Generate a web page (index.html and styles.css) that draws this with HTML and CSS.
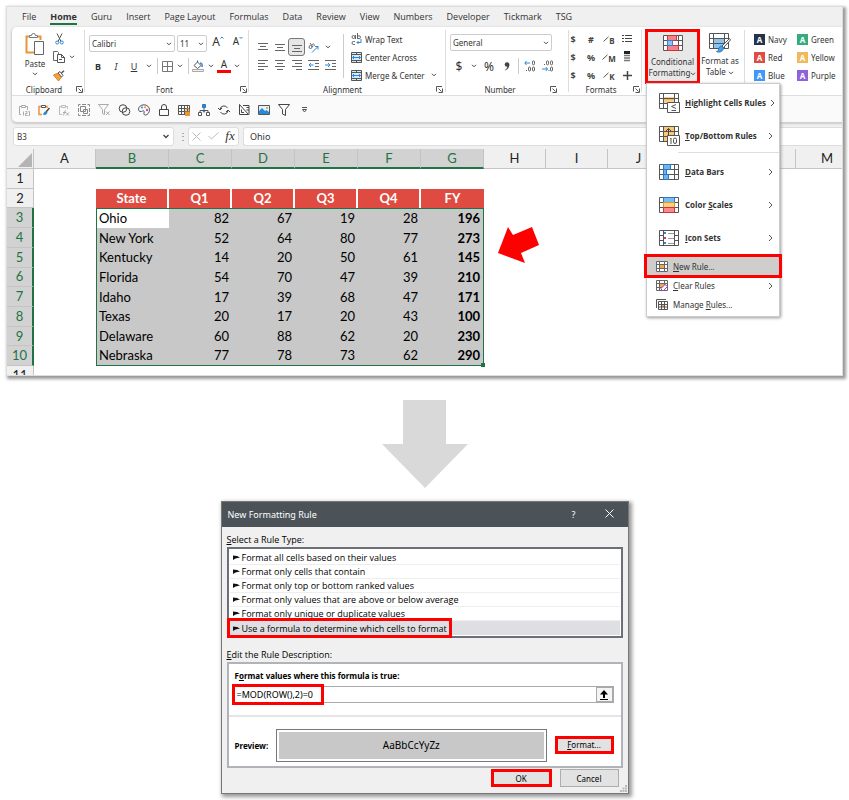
FILE: index.html
```html
<!DOCTYPE html>
<html lang="en">
<head>
    <meta charset="UTF-8">
    <title>New Formatting Rule</title>
    <meta name="viewport" content="width=device-width, initial-scale=1.0">
    <link rel="stylesheet" href="styles.css">
</head>
<body>
    <!-- shared icons -->
    <svg class="sprite" aria-hidden="true">
        <symbol id="chev" viewBox="0 0 6 4"><path d="M1 .8l2 2 2-2" fill="none" stroke="#444" stroke-width="1"/></symbol>
        <symbol id="launch" viewBox="0 0 7 7"><path d="M.5 5.500V.5h5.500M2.500 2.500l3 3M6.500 2.500v4h-4" fill="none" stroke="#555" stroke-width="1"/></symbol>
        <symbol id="right" viewBox="0 0 5 8"><path d="M1 1l3 3-3 3" fill="none" stroke="#555" stroke-width="1"/></symbol>
        <symbol id="grid" viewBox="0 0 20 16"><path d="M.5.5h19v15H.5zM.5 5.500h19M.5 10.500h19M4.500.5v15M15.500.5v15" fill="none" stroke="#555" stroke-width="1"/></symbol>
        <symbol id="smallgrid" viewBox="0 0 12 11"><path d="M.5.5h11v10H.5zM.5 3.500h11M.5 7.500h11M3.500.5v10M8.500.5v10" fill="none" stroke="#666" stroke-width="1"/></symbol>
        <symbol id="pointer" viewBox="0 0 7 5"><path d="M0 .5L4 1l3 1.500L2.500 3.500 0 5z" fill="#111"/></symbol>
        <symbol id="slash" viewBox="0 0 6 6"><path d="M.5 5.500L5.500.8" stroke="#555" stroke-width="1"/></symbol>
    </svg>

    <div class="excel">
        <nav class="tabs">
            <a href="#">File</a>
            <a href="#" class="active">Home</a>
            <a href="#">Guru</a>
            <a href="#">Insert</a>
            <a href="#">Page Layout</a>
            <a href="#">Formulas</a>
            <a href="#">Data</a>
            <a href="#">Review</a>
            <a href="#">View</a>
            <a href="#">Numbers</a>
            <a href="#">Developer</a>
            <a href="#">Tickmark</a>
            <a href="#">TSG</a>
        </nav>

        <div class="ribbon">
            <div class="groups">
                <div class="group clipboard">
                    <div class="group-body">
                        <button class="big paste">
                            <svg width="20" height="22" viewBox="0 0 20 22"><path d="M4 3.500H1.500v16H9M13 3.500h2.500V7" fill="none" stroke="#e8953a" stroke-width="2"/><path d="M4.500 4.500v-2h2a2 2 0 0 1 4 0h2v2z" fill="#fff" stroke="#777"/><path d="M9.500 8.500h9v13h-9z" fill="#fff" stroke="#666"/></svg>
                            <span>Paste</span>
                            <svg width="6" height="4"><use href="#chev"/></svg>
                        </button>
                        <div class="rows">
                            <div class="row"><button class="ib" aria-label="Cut"><svg width="9" height="12" viewBox="0 0 9 12"><path d="M2 .5l4 8M7 .5l-4 8" fill="none" stroke="#555"/><circle cx="2.200" cy="9.500" r="1.500" fill="none" stroke="#2b88d8"/><circle cx="6.800" cy="9.500" r="1.500" fill="none" stroke="#2b88d8"/></svg></button></div>
                            <div class="row"><button class="ib" aria-label="Copy"><svg width="12" height="12" viewBox="0 0 12 12"><path d="M4 9.500H.5v-9h4l1 1V3" fill="none" stroke="#666"/><path d="M4.500 3.500h4l3 3v5h-7zM8.500 3.500v3h3M6 8.500h3" fill="#fff" stroke="#555"/></svg></button><button class="ib chev" aria-label="Copy options"><svg width="6" height="4"><use href="#chev"/></svg></button></div>
                            <div class="row"><button class="ib" aria-label="Format painter"><svg width="12" height="11" viewBox="0 0 12 11"><path d="M.5 5l5-2 3 4-3 4z" fill="#f3a33c" stroke="#d98324"/><path d="M5 3l2-1.500 3 4-1.500 1.500z" fill="#fff" stroke="#555"/><path d="M8.500 3L11 .8" stroke="#555" stroke-width="1.500"/></svg></button></div>
                        </div>
                    </div>
                    <div class="group-foot"><span>Clipboard</span><svg width="7" height="7"><use href="#launch"/></svg></div>
                </div>

                <div class="group font">
                    <div class="group-body stack">
                        <div class="row combos">
                            <label class="combo face"><select aria-label="Font"><option>Calibri</option></select><svg width="6" height="4"><use href="#chev"/></svg></label>
                            <label class="combo size"><select aria-label="Font size"><option>11</option></select><svg width="6" height="4"><use href="#chev"/></svg></label>
                            <button class="ib grow" aria-label="Increase font size">A<svg width="4" height="4" viewBox="0 0 4 4"><path d="M.5 2.500L2 1l1.500 1.500" fill="none" stroke="#2b88d8"/></svg></button>
                            <button class="ib grow small" aria-label="Decrease font size">A<svg width="4" height="4" viewBox="0 0 4 4"><path d="M.5 1L2 2.500 3.500 1" fill="none" stroke="#2b88d8"/></svg></button>
                        </div>
                        <div class="row">
                            <button class="ib"><b>B</b></button>
                            <button class="ib"><i>I</i></button>
                            <button class="ib"><u>U</u></button>
                            <button class="ib chev" aria-label="Underline options"><svg width="6" height="4"><use href="#chev"/></svg></button>
                            <span class="vr"></span>
                            <button class="ib mid" aria-label="Borders"><svg width="11" height="11" viewBox="0 0 11 11"><path d="M.5.5h10v10H.5zM5.500.5v10M.5 5.500h10" fill="none" stroke="#777"/></svg></button>
                            <button class="ib chev" aria-label="Border options"><svg width="6" height="4"><use href="#chev"/></svg></button>
                            <span class="vr"></span>
                            <button class="ib mid" aria-label="Fill colour"><svg width="12" height="12" viewBox="0 0 12 12"><path d="M2 5.500L5.500 2 9 5.500 5.500 8.500zM5.500 2V.5" fill="none" stroke="#555"/><path d="M8 3c2 0 2.500 1.500 2 4" fill="none" stroke="#2b88d8" stroke-width="1.500"/><path d="M.5 9.500h11v2H.5z" fill="#eee" stroke="#aaa"/></svg></button>
                            <button class="ib chev" aria-label="Fill options"><svg width="6" height="4"><use href="#chev"/></svg></button>
                            <button class="ib mid colour">A</button>
                            <button class="ib chev" aria-label="Font colour options"><svg width="6" height="4"><use href="#chev"/></svg></button>
                        </div>
                    </div>
                    <div class="group-foot"><span>Font</span><svg width="7" height="7"><use href="#launch"/></svg></div>
                </div>

                <div class="group align">
                    <div class="group-body">
                        <div class="align-grid">
                            <button class="ib" aria-label="Top align"><svg width="10" height="8" viewBox="0 0 10 8"><path d="M0 .5h10M2 3.500h6M0 6.500h10" stroke="#666"/></svg></button>
                            <button class="ib" aria-label="Middle align"><svg width="10" height="8" viewBox="0 0 10 8"><path d="M0 1.500h10M2 4.500h6M0 7.500h10" stroke="#666"/></svg></button>
                            <button class="ib pressed" aria-label="Bottom align"><svg width="10" height="10" viewBox="0 0 10 10"><path d="M0 3.500h10M2 6.500h6M0 9.500h10" stroke="#666"/></svg></button>
                            <button class="ib" aria-label="Orientation"><svg width="12" height="11" viewBox="0 0 12 11"><circle cx="2.500" cy="5" r="1.500" fill="none" stroke="#666"/><path d="M2 1l3 4M4 3c1-2 3-1 2 1" fill="none" stroke="#666"/><path d="M4 10.500l6-6M7 4.500h3v3" fill="none" stroke="#2b88d8"/></svg></button>
                            <button class="ib chev" aria-label="Orientation options"><svg width="6" height="4"><use href="#chev"/></svg></button>
                            <button class="ib" aria-label="Align left"><svg width="10" height="11" viewBox="0 0 10 11"><path d="M0 .5h10M0 3.500h7M0 6.500h10M0 9.500h6" stroke="#666"/></svg></button>
                            <button class="ib" aria-label="Center"><svg width="10" height="11" viewBox="0 0 10 11"><path d="M0 .5h10M2 3.500h6M0 6.500h10M2 9.500h6" stroke="#666"/></svg></button>
                            <button class="ib" aria-label="Align right"><svg width="10" height="11" viewBox="0 0 10 11"><path d="M0 .5h10M3 3.500h7M0 6.500h10M4 9.500h6" stroke="#666"/></svg></button>
                            <button class="ib" aria-label="Decrease indent"><svg width="11" height="11" viewBox="0 0 11 11"><path d="M0 .5h11M7 3.500h4M7 6.500h4M0 9.500h11" stroke="#666"/><path d="M5.500 5H1M3 3L1 5l2 2" fill="none" stroke="#2b88d8"/></svg></button>
                            <button class="ib" aria-label="Increase indent"><svg width="11" height="11" viewBox="0 0 11 11"><path d="M0 .5h11M7 3.500h4M7 6.500h4M0 9.500h11" stroke="#666"/><path d="M0 5h4.500M3 3l2 2-2 2" fill="none" stroke="#2b88d8"/></svg></button>
                        </div>
                        <span class="vr tall"></span>
                        <div class="rows wrap-rows">
                            <button class="line"><svg width="11" height="12" viewBox="0 0 11 12"><circle cx="2.500" cy="4" r="1.500" fill="none" stroke="#666"/><path d="M4.500 2v4M6.500 0v6M4 8.500H2.500a1 1 0 0 0 0 3H4" fill="none" stroke="#666"/><circle cx="8" cy="4.300" r="1.500" fill="none" stroke="#666"/><path d="M10 6v3.500H6M7.500 8L6 9.500 7.500 11" fill="none" stroke="#2b88d8"/></svg>Wrap Text</button>
                            <button class="line"><svg width="11" height="11" viewBox="0 0 11 11"><path d="M.5.5h10v10H.5z" fill="#d5e9f8" stroke="#555"/><path d="M5.500.5v2M5.500 8.500v2M.5 2.500h10M.5 8.500h10" stroke="#555"/><path d="M1.500 5.500h8M3 4L1.500 5.500 3 7M8 4l1.500 1.500L8 7" fill="none" stroke="#2b88d8"/></svg>Center Across</button>
                            <button class="line"><svg width="11" height="11" viewBox="0 0 11 11"><path d="M.5.5h10v10H.5z" fill="#d5e9f8" stroke="#555"/><path d="M5.500.5v2M5.500 8.500v2M.5 2.500h10M.5 8.500h10" stroke="#555"/><path d="M1.500 5.500h8M3 4L1.500 5.500 3 7M8 4l1.500 1.500L8 7" fill="none" stroke="#2b88d8"/></svg>Merge &amp; Center<svg class="end" width="6" height="4"><use href="#chev"/></svg></button>
                        </div>
                    </div>
                    <div class="group-foot"><span>Alignment</span><svg width="7" height="7"><use href="#launch"/></svg></div>
                </div>

                <div class="group number">
                    <div class="group-body stack">
                        <div class="row combos">
                            <label class="combo format"><select aria-label="Number format"><option>General</option></select><svg width="6" height="4"><use href="#chev"/></svg></label>
                        </div>
                        <div class="row">
                            <button class="ib sign">$</button>
                            <button class="ib chev" aria-label="Currency options"><svg width="6" height="4"><use href="#chev"/></svg></button>
                            <button class="ib sign">%</button>
                            <button class="ib" aria-label="Comma style"><svg width="6" height="9" viewBox="0 0 6 9"><circle cx="3" cy="2.500" r="2.300" fill="#444"/><path d="M5.300 2.500C5.300 5.500 4 7.500 1 8.500L.8 8C2.500 7 3.500 5.500 3.400 3.500z" fill="#444"/></svg></button>
                            <span class="vr"></span>
                            <button class="ib" aria-label="Increase decimal"><svg width="12" height="12" viewBox="0 0 12 12"><path d="M6 3H1M2.500 1L.8 3l1.700 2" fill="none" stroke="#2b88d8"/><rect x="8.500" y=".8" width="2" height="4" rx="1" fill="none" stroke="#666"/><rect x="4.500" y="7" width="2" height="4" rx="1" fill="none" stroke="#666"/><rect x="8.500" y="7" width="2" height="4" rx="1" fill="none" stroke="#666"/><path d="M2 10.500h1" stroke="#666"/></svg></button>
                            <button class="ib" aria-label="Decrease decimal"><svg width="12" height="12" viewBox="0 0 12 12"><path d="M0 9h5.500M3.800 7l1.700 2-1.700 2" fill="none" stroke="#2b88d8"/><rect x="4.500" y=".8" width="2" height="4" rx="1" fill="none" stroke="#666"/><rect x="8.500" y=".8" width="2" height="4" rx="1" fill="none" stroke="#666"/><rect x="8.500" y="7" width="2" height="4" rx="1" fill="none" stroke="#666"/><path d="M2 4.500h1M6.500 10.500h1" stroke="#666"/></svg></button>
                        </div>
                    </div>
                    <div class="group-foot"><span>Number</span><svg width="7" height="7"><use href="#launch"/></svg></div>
                </div>

                <div class="group formats">
                    <div class="group-body">
                        <div class="format-grid">
                            <button class="ib">$</button>
                            <button class="ib">#</button>
                            <button class="ib unit"><svg width="6" height="6"><use href="#slash"/></svg>B</button>
                            <button class="ib" aria-label="List"><svg width="10" height="10" viewBox="0 0 10 10"><path d="M0 1.500h2M3 1.500h7M0 4.500h2M3 4.500h7M0 7.500h2M3 7.500h7" stroke="#444"/></svg></button>
                            <button class="ib">$</button>
                            <button class="ib">%</button>
                            <button class="ib unit"><svg width="6" height="6"><use href="#slash"/></svg>M</button>
                            <button class="ib" aria-label="Bands"><svg width="6" height="12" viewBox="0 0 6 12"><path d="M0 1.500h6" stroke="#222" stroke-width="3"/><path d="M0 4.500h6M0 7h6M0 9.500h6" stroke="#777" stroke-width="1.500"/></svg></button>
                            <button class="ib">$</button>
                            <button class="ib">%</button>
                            <button class="ib unit"><svg width="6" height="6"><use href="#slash"/></svg>K</button>
                            <button class="ib" aria-label="Add"><svg width="9" height="9" viewBox="0 0 9 9"><path d="M4.500 0v9M0 4.500h9" stroke="#444" stroke-width="1.500"/></svg></button>
                        </div>
                    </div>
                    <div class="group-foot"><span>Formats</span><svg width="7" height="7"><use href="#launch"/></svg></div>
                </div>

                <div class="group styles">
                    <div class="cond">
                        <button class="big marked">
                            <svg width="20" height="16" viewBox="0 0 20 16"><path fill="#fff" d="M0 0h20v16H0z"/><use href="#grid"/><path d="M4.500.5h9v5h-9zM4.500 10.500h11v5h-11z" fill="#f5828a" stroke="#d13438"/><path d="M4.500 5.500h5v5h-5z" fill="#8cc4f0" stroke="#2b88d8"/></svg>
                            <span>Conditional<br>Formatting<svg width="6" height="4"><use href="#chev"/></svg></span>
                        </button>

                        <div class="menu">
                            <button class="item large"><svg width="22" height="20" viewBox="0 0 22 20"><path d="M4.500 5h11v6h-11z" fill="#fbd08a"/><path d="M5 5.500h10" stroke="#e8953a" stroke-width="2"/><use href="#grid" width="20" height="16"/><path d="M8.500 9.500h12v10h-12z" fill="#fff" stroke="#555"/><path d="M17 11.500l-4.500 2L17 15.500M12.500 17.500H17" fill="none" stroke="#555"/></svg><span><u>H</u>ighlight Cells Rules</span><svg class="end" width="5" height="8"><use href="#right"/></svg></button>
                            <button class="item large"><svg width="22" height="20" viewBox="0 0 22 20"><path d="M5 1h10v14H5z" fill="#fbc675"/><use href="#grid" width="20" height="16"/><path d="M9.500 9V2.500M7 5l2.500-2.500L12 5" fill="none" stroke="#444"/><path d="M8.500 9.500h12v10h-12z" fill="#fff" stroke="#555"/><path d="M11 13l1-1v6" fill="none" stroke="#555"/><rect x="14.500" y="12" width="3" height="5.500" rx="1.500" fill="none" stroke="#555"/></svg><span><u>T</u>op/Bottom Rules</span><svg class="end" width="5" height="8"><use href="#right"/></svg></button>
                            <hr>
                            <button class="item large"><svg width="22" height="16" viewBox="0 0 22 16"><use href="#grid" width="20" height="16"/><path d="M4.500.5h7v5h-7zM4.500 5.500h3v5h-3zM4.500 10.500h5v5h-5z" fill="#6db5ee" stroke="#2b78c0"/></svg><span><u>D</u>ata Bars</span><svg class="end" width="5" height="8"><use href="#right"/></svg></button>
                            <button class="item large"><svg width="22" height="16" viewBox="0 0 22 16"><use href="#grid" width="20" height="16"/><path d="M4.500.5h11v5h-11z" fill="#79bdf2" stroke="#2b78c0"/><path d="M4.500 5.500h11v5h-11z" fill="#fdd27c" stroke="#d99a2b"/><path d="M4.500 10.500h11v5h-11z" fill="#f98a90" stroke="#d13438"/></svg><span>Color <u>S</u>cales</span><svg class="end" width="5" height="8"><use href="#right"/></svg></button>
                            <button class="item large"><svg width="22" height="16" viewBox="0 0 22 16"><use href="#grid" width="20" height="16"/><path d="M5 1h10v14H5z" fill="#fff"/><path d="M5 2h2v2H5zM5 12h2v2H5z" fill="#2b88d8"/><path d="M5 7h2v2H5z" fill="#e03a3a"/><path d="M9 3.500h6M9 8.500h6M9 13.500h6" stroke="#999"/></svg><span><u>I</u>con Sets</span><svg class="end" width="5" height="8"><use href="#right"/></svg></button>
                            <button class="item picked"><svg width="12" height="11" viewBox="0 0 12 11"><path d="M0 0h12v11H0z" fill="#fff"/><path d="M3 3h6v5H3z" fill="#f5a64b"/><use href="#smallgrid" width="12" height="11"/></svg><span><u>N</u>ew Rule...</span></button>
                            <button class="item"><svg width="12" height="11" viewBox="0 0 12 11"><path d="M3 3h6v4H3z" fill="#f5a64b"/><use href="#smallgrid" width="12" height="11"/><path d="M5 8.500l4-4 2.500 2-4 4H6z" fill="#fff" stroke="#a33ab8"/></svg><span><u>C</u>lear Rules</span><svg class="end" width="5" height="8"><use href="#right"/></svg></button>
                            <button class="item"><svg width="12" height="11" viewBox="0 0 12 11"><path d="M.5 9V.5H10" fill="none" stroke="#555"/><path d="M5 5h4v3H5z" fill="#f5a64b"/><path d="M2.500 2.500h9v8h-9zM2.500 5.500h9M2.500 8h9M5.500 2.500v8M8.500 2.500v8" fill="none" stroke="#555"/></svg><span>Manage <u>R</u>ules...</span></button>
                        </div>
                    </div>
                    <button class="big table-style">
                        <svg width="22" height="20" viewBox="0 0 22 20"><path d="M5 5h10v10H5z" fill="#8cc4f0"/><use href="#grid" width="20" height="16"/><path d="M20.500 5.500L13 13l1.500 1.500L21.500 7z" fill="#fff" stroke="#555"/><path d="M12.500 13c-2 0-2.500 1.500-3 4-.5 1.500-2 1.500-2 1.500 3 1.500 6.500 0 7-3.500z" fill="#4aa0e6" stroke="#2b78c0"/></svg>
                        <span>Format as<br>Table <svg width="6" height="4"><use href="#chev"/></svg></span>
                    </button>
                </div>

                <div class="group swatches">
                    <div class="swatch-grid">
                        <button class="swatch"><span class="chip navy">A</span>Navy</button>
                        <button class="swatch"><span class="chip green">A</span>Green</button>
                        <button class="swatch"><span class="chip red">A</span>Red</button>
                        <button class="swatch"><span class="chip yellow">A</span>Yellow</button>
                        <button class="swatch"><span class="chip blue">A</span>Blue</button>
                        <button class="swatch"><span class="chip purple">A</span>Purple</button>
                    </div>
                </div>
            </div>

            <div class="quick">
                <button class="ib" aria-label="Paste values"><svg width="12" height="12" viewBox="0 0 12 12"><path d="M3 2.500H1.500v8H3M8 2.500h1.500V6M3.500 3.500v-2h4v2zM5.500 7.500v4M7.500 7.500h1.500v2H7.500v2H9.500M10.500 7.500h1v4h-1" fill="none" stroke="#aaa"/></svg></button>
                <button class="ib" aria-label="Paste formats"><svg width="12" height="12" viewBox="0 0 12 12"><path d="M3 2.500H1v8h3M7 2.500h2V4" fill="none" stroke="#e8953a" stroke-width="1.500"/><path d="M3.500 3.500v-2h4v2z" fill="#fff" stroke="#555"/><path d="M11.500 4L8 8" stroke="#444" stroke-width="1.500"/><path d="M8.500 7.500c-2-.5-3 1-3.500 3 2 1 4 0 4.500-2z" fill="#2b88d8"/></svg></button>
                <button class="ib" aria-label="Paste formulas"><svg width="12" height="12" viewBox="0 0 12 12"><path d="M3 2.500H1.500v8H4M8 2.500h1.500V5M3.500 3.500v-2h4v2z" fill="none" stroke="#bbb"/><path d="M5 11.500c1.500 0 1-5 3-5M5 8.500h3M8 8.500l3 3M11 8.500l-3 3" fill="none" stroke="#aaa"/></svg></button>
                <button class="ib" aria-label="Group objects"><svg width="12" height="12" viewBox="0 0 12 12"><path d="M.5 2.500v-2h2M9.500.5h2v2M11.500 9.500v2h-2M2.500 11.500h-2v-2M4 .5h4M4 11.500h4M.5 4v4M11.500 4v4M2.500 2.500h5v5h-5zM5.500 5.500h4v4h-4z" fill="none" stroke="#888"/></svg></button>
                <button class="ib" aria-label="Clear filter"><svg width="12" height="12" viewBox="0 0 12 12"><path d="M.5.5h10L6.500 5.500v5l-2-1v-4zM8 7.500l3.500 3.500M11.500 7.500L8 11" fill="none" stroke="#aaa"/></svg></button>
                <button class="ib" aria-label="Merge shapes"><svg width="13" height="12" viewBox="0 0 13 12"><circle cx="5" cy="4.500" r="3.800" fill="none" stroke="#444"/><circle cx="8" cy="7.500" r="3.800" fill="none" stroke="#444"/></svg></button>
                <button class="ib" aria-label="Theme colours"><svg width="12" height="12" viewBox="0 0 12 12"><path d="M6 .8c-3 0-5.500 2-5.500 4.500S3 8 4.500 7s2 .5 1.500 2 .5 2 1.500 2c2 0 4-2.500 4-5.200S9 .8 6 .8z" fill="none" stroke="#555"/><circle cx="4" cy="3.500" r="1" fill="#2b88d8"/><circle cx="7" cy="3.200" r="1" fill="#e8953a"/><circle cx="9" cy="6" r="1.200" fill="#c050c8"/></svg></button>
                <button class="ib" aria-label="Protect"><svg width="10" height="12" viewBox="0 0 10 12"><path d="M.5 5.500h9v6h-9zM2.500 5.500V3a2.500 2.500 0 0 1 5 0v2.500" fill="none" stroke="#444"/></svg></button>
                <button class="ib" aria-label="Lock cells"><svg width="12" height="12" viewBox="0 0 12 12"><path d="M.5 1.500h11v9H.5zM.5 4.500h11M.5 7.500h11M3.500 1.500v9M6.500 1.500v9M9.500 1.500v9" fill="none" stroke="#555"/><path d="M7 7.500h5V12H7z" fill="#e8953a"/><path d="M8 7V6a1.500 1.500 0 0 1 3 0v1" fill="none" stroke="#e8953a"/></svg></button>
                <button class="ib" aria-label="Trace"><svg width="12" height="12" viewBox="0 0 12 12"><path d="M4.500.5h3v3h-3z" fill="#2b88d8" stroke="#2b78c0"/><path d="M6 4v3M2 8.500V6.500h8v2" fill="none" stroke="#555"/><path d="M.5 8.500h3v3h-3zM8.500 8.500h3v3h-3z" fill="#fff" stroke="#555"/><path d="M4.500 7L6 9l1.500-2z" fill="#2b88d8"/></svg></button>
                <button class="ib" aria-label="Refresh"><svg width="12" height="10" viewBox="0 0 12 10"><path d="M2 4.500a4 4 0 0 1 7.500-1.500M10 5.500A4 4 0 0 1 2.500 7M0 3l2 2 2-2M8 7l2-2 2 2" fill="none" stroke="#444"/></svg></button>
                <button class="ib" aria-label="Edit shape"><svg width="12" height="12" viewBox="0 0 12 12"><path d="M1.500.5v10h9zM3.500 5.500v3H6M5 1.500h6v9M8.500 3.500H11M8.500 6H11" fill="none" stroke="#444"/></svg></button>
                <button class="ib" aria-label="Picture"><svg width="12" height="10" viewBox="0 0 12 10"><path d="M.5.5h11v9H.5z" fill="#e5f2fb" stroke="#555"/><path d="M1 9V6l3-3 3 3 1.500-1L11 7v2z" fill="#2b88d8"/><circle cx="9" cy="3" r="1" fill="#e8953a"/></svg></button>
                <button class="ib" aria-label="Filter"><svg width="12" height="12" viewBox="0 0 12 12"><path d="M.5.5h11L7.500 5.500v6l-3-1.500V5.500z" fill="none" stroke="#444"/></svg></button>
                <button class="ib" aria-label="More commands"><svg width="5" height="6" viewBox="0 0 5 6"><path d="M0 .5h5M.5 2.500L2.500 5l2-2.500z" fill="none" stroke="#555"/></svg></button>
            </div>
        </div>

        <div class="formula-bar">
            <label class="name-box"><input type="text" value="B3" aria-label="Name box"><svg width="8" height="5" viewBox="0 0 6 4"><use href="#chev"/></svg></label>
            <span class="dots">⋮</span>
            <div class="fx">
                <svg width="9" height="9" viewBox="0 0 9 9"><path d="M.5.5l8 8M8.500.5l-8 8" stroke="#bbb"/></svg>
                <svg width="11" height="8" viewBox="0 0 11 8"><path d="M.5 4l3 3 7-6.500" fill="none" stroke="#bbb"/></svg>
                <i>fx</i>
            </div>
            <input class="formula" type="text" value="Ohio" aria-label="Formula">
        </div>

        <div class="sheet">
            <table>
                <colgroup>
                    <col class="col-row"><col class="col-a"><col class="col-b">
                    <col class="col-q" span="5">
                    <col class="col-a" span="3">
                    <col class="col-q" span="3">
                </colgroup>
                <thead>
                    <tr>
                        <th class="corner"><svg width="14" height="14" viewBox="0 0 14 14"><path d="M14 0v14H0z" fill="#b4b4b4"/></svg></th>
                        <th>A</th><th class="on">B</th><th class="on">C</th><th class="on">D</th><th class="on">E</th><th class="on">F</th><th class="on">G</th>
                        <th>H</th><th>I</th><th>J</th><th>K</th><th>L</th><th>M</th>
                    </tr>
                </thead>
                <tbody>
                    <tr><th>1</th></tr>
                    <tr class="titles"><th>2</th><td></td><td>State</td><td>Q1</td><td>Q2</td><td>Q3</td><td>Q4</td><td>FY</td></tr>
                </tbody>
                <tbody class="selection">
                    <tr><th>3</th><td></td><td class="current">Ohio</td><td>82</td><td>67</td><td>19</td><td>28</td><td>196</td></tr>
                    <tr><th>4</th><td></td><td>New York</td><td>52</td><td>64</td><td>80</td><td>77</td><td>273</td></tr>
                    <tr><th>5</th><td></td><td>Kentucky</td><td>14</td><td>20</td><td>50</td><td>61</td><td>145</td></tr>
                    <tr><th>6</th><td></td><td>Florida</td><td>54</td><td>70</td><td>47</td><td>39</td><td>210</td></tr>
                    <tr><th>7</th><td></td><td>Idaho</td><td>17</td><td>39</td><td>68</td><td>47</td><td>171</td></tr>
                    <tr><th>8</th><td></td><td>Texas</td><td>20</td><td>17</td><td>20</td><td>43</td><td>100</td></tr>
                    <tr><th>9</th><td></td><td>Delaware</td><td>60</td><td>88</td><td>62</td><td>20</td><td>230</td></tr>
                    <tr><th>10</th><td></td><td>Nebraska</td><td>77</td><td>78</td><td>73</td><td>62</td><td class="handle">290</td></tr>
                </tbody>
                <tbody>
                    <tr><th>11</th></tr>
                </tbody>
            </table>
            <svg class="callout" width="41" height="36" viewBox="0 0 41 36"><path d="M0 26L10 0l5 8 19-8 7 18-18 8 4 10z" fill="#f00"/></svg>
        </div>
    </div>

    <svg class="down" width="86" height="88" viewBox="0 0 86 88"><path d="M21 0h43v44h22L43 88 0 44h21z" fill="#d9d9d9"/></svg>

    <div class="dialog">
        <div class="dialog-title">
            <span>New Formatting Rule</span>
            <button aria-label="Help">?</button>
            <button aria-label="Close"><svg width="9" height="9" viewBox="0 0 9 9"><path d="M.5.5l8 8M8.500.5l-8 8" stroke="#fff"/></svg></button>
        </div>
        <div class="dialog-body">
            <div class="caption" id="typeLabel"><u>S</u>elect a Rule Type:</div>
            <ul class="types" role="listbox" aria-labelledby="typeLabel">
                <li role="option"><svg width="7" height="5"><use href="#pointer"/></svg>Format all cells based on their values</li>
                <li role="option"><svg width="7" height="5"><use href="#pointer"/></svg>Format only cells that contain</li>
                <li role="option"><svg width="7" height="5"><use href="#pointer"/></svg>Format only top or bottom ranked values</li>
                <li role="option"><svg width="7" height="5"><use href="#pointer"/></svg>Format only values that are above or below average</li>
                <li role="option"><svg width="7" height="5"><use href="#pointer"/></svg>Format only unique or duplicate values</li>
                <li role="option" class="chosen" aria-selected="true"><svg width="7" height="5"><use href="#pointer"/></svg>Use a formula to determine which cells to format</li>
            </ul>
            <div class="caption"><u>E</u>dit the Rule Description:</div>
            <div class="rule">
                <div class="rule-formula">
                    <label for="formula">F<u>o</u>rmat values where this formula is true:</label>
                    <div class="field">
                        <input type="text" id="formula" value="=MOD(ROW(),2)=0">
                        <button aria-label="Collapse dialog"><svg width="8" height="10" viewBox="0 0 8 10"><path d="M4 8V2" stroke="#000" stroke-width="2"/><path d="M0 4.500L4 0l4 4.500z"/><path d="M0 9.500h8" stroke="#000"/></svg></button>
                    </div>
                </div>
                <div class="rule-preview">
                    <b>Preview:</b>
                    <div class="sample">AaBbCcYyZz</div>
                    <button class="btn format-btn"><span><u>F</u>ormat...</span></button>
                </div>
            </div>
            <div class="actions">
                <button class="btn ok">OK</button>
                <button class="btn">Cancel</button>
            </div>
        </div>
        <svg class="grip" width="7" height="7" viewBox="0 0 7 7"><path d="M5 0h2v2H5zM5 2.500h2v2H5zM5 5h2v2H5zM2.500 2.500h2v2h-2zM2.500 5h2v2h-2zM0 5h2v2H0z" fill="#bbb"/></svg>
    </div>
</body>
</html>
```

FILE: styles.css
```css
*, *::after { box-sizing: border-box; }
body {
    margin: 0; padding: 6px; background: #fff; color: #333;
    font-family: "Noto Sans", "Open Sans", sans-serif; font-size: 8px; line-height: 11px;
}
button, input, select { font: inherit; color: inherit; }
button { padding: 0; border: none; background: none; cursor: pointer; }
a { color: inherit; text-decoration: none; }
svg { flex: none; }
.sprite { position: absolute; width: 0; height: 0; }

/* spreadsheet window */
.excel {
    background: #f0f0f0; border: 1px solid #ddd; overflow: hidden;
    box-shadow: 2px 2px 3px 1px #999;
}
.tabs {
    display: flex; gap: 14px; padding: 3px 15px 0; height: 20px;
    font-family: "Open Sans", sans-serif; font-size: 9px; line-height: 14px;
}
.tabs .active { font-weight: bold; border-bottom: 2px solid #217346; height: 15px; }

.ribbon {
    margin-left: 5px; background: #fff; border-radius: 5px 0 0 5px;
    box-shadow: 0 1px 2px 1px #ccc;
}
.groups { display: flex; height: 69px; padding-top: 3px; border-bottom: 1px solid #ddd; }
.group { position: relative; display: flex; flex-direction: column; flex: none; }
.group::after { content: ""; position: absolute; right: 0; top: 0; bottom: 3px; width: 1px; background: #ddd; }
.group-body { display: flex; height: 54px; }
.group-foot { display: flex; align-items: center; padding-right: 2px; }
.group-foot span { flex: 1; text-align: center; }
.clipboard { width: 73px; }
.font { width: 164px; padding-left: 4px; }
.align { width: 197px; }
.number { width: 123px; padding-left: 4px; }
.number .group-foot { padding-right: 12px; }
.formats { width: 73px; }
.align .group-foot { padding-right: 3px; }

.ib { display: flex; align-items: center; justify-content: center; width: 18px; height: 18px; font-size: 9px; }
.ib.mid { width: 14px; }
.ib.chev { width: 12px; }
.row { display: flex; align-items: center; }
.rows { display: flex; flex-direction: column; }
.stack { flex-direction: column; justify-content: space-between; padding: 4px 0 9px; }
.vr { width: 1px; height: 16px; margin: 0 2px; background: #ccc; }
.vr.tall { height: 44px; margin: 4px 7px 0 4px; }
.big {
    display: flex; flex-direction: column; align-items: center; text-align: center;
    width: 44px; padding-top: 3px; gap: 2px;
}
.paste { gap: 3px; width: 46px; }
.clipboard .rows { width: 27px; margin-left: -8px; }
.clipboard .chev { width: 8px; }
.combos { gap: 2px; }
.combo { position: relative; display: flex; }
.combo select {
    appearance: none; width: 100%; height: 17px; padding: 0 2px; background: #fff;
    border: 1px solid #ccc; border-radius: 2px;
}
.combo svg { position: absolute; right: 3px; top: 7px; pointer-events: none; }
.face { width: 86px; }
.size { width: 30px; }
.format { width: 102px; }
.grow { font-size: 12px; align-items: flex-start; padding-top: 2px; }
.grow.small { font-size: 10px; }
.colour { border-bottom: 3px solid #f00; height: 14px; font-size: 10px; }
.align-grid { display: grid; grid-template-columns: repeat(5, 17px); align-content: start; width: 90px; padding: 8px 0 0 5px; }
.pressed { width: 17px; background: #e6e6e6; border: 1px solid #777; border-radius: 3px; }
.align-grid .ib { width: 17px; }
.align-grid .chev { width: 12px; }
.wrap-rows { flex: 1; }
.line { display: flex; align-items: center; gap: 3px; height: 18px; padding-right: 9px; }
.end { margin-left: auto; }
.sign { font-size: 12px; }
.format-grid { display: grid; grid-template-columns: repeat(4, 18px); width: 72px; margin-left: -5px; color: #444; }
.format-grid .ib { font-weight: bold; }
.format-grid .unit { font-size: 8px; padding-top: 3px; }
.unit svg { margin-bottom: 4px; }

.styles { flex-direction: row; width: 103px; padding-left: 4px; }
.styles .big { height: 54px; white-space: nowrap; }
.styles .big span svg { display: inline-block; vertical-align: middle; }
.cond { position: relative; margin: -1px 0 0 -1px; }
.cond .marked { width: 55px; height: 55px; background: #e8e8e8; border: 3px solid #f00; gap: 5px; }
.styles .table-style { width: 40px; }
.swatch-grid { display: grid; grid-template-columns: 43px 43px; padding-left: 9px; }
.swatches::after { display: none; }
.swatch { display: flex; align-items: center; gap: 3px; height: 18px; }
.chip { width: 11px; height: 11px; color: #fff; font-weight: bold; text-align: center; }
.navy { background: #24344c; }
.green { background: #35ac7d; }
.red { background: #e04b43; }
.yellow { background: #f0b95c; }
.blue { background: #4198f7; }
.purple { background: #8f62dc; }

.menu {
    position: absolute; z-index: 2; left: 1px; top: 54px; width: 134px; padding: 2px 0;
    display: flex; flex-direction: column;
    background: #fff; border: 1px solid #ccc; box-shadow: 1px 1px 3px #999;
}
.item { display: flex; align-items: center; gap: 5px; height: 19px; padding: 0 6px 0 9px; text-align: left; white-space: nowrap; }
.item.large { height: 33px; gap: 4px; padding-left: 12px; font-family: "Open Sans", sans-serif; font-weight: bold; }
.menu hr { width: 101px; margin: 0 0 2px auto; border: none; border-top: 1px solid #ddd; }
.item.picked { height: 24px; margin: 0 -3px -2px; padding-left: 9px; background: #d0cecd; border: 3px solid #f00; }

.quick { display: flex; gap: 2px; padding: 5px 3px 3px; background: #fafafa; border-radius: 0 0 0 5px; }

.formula-bar { display: flex; align-items: center; gap: 4px; padding: 5px 0 4px 6px; height: 27px; }
.name-box, .fx, .formula { height: 19px; background: #fff; border: 1px solid #ddd; border-radius: 3px; }
.name-box { display: flex; align-items: center; width: 161px; padding: 0 3px; }
.name-box input { flex: 1; min-width: 0; padding: 0; border: none; }
.dots { width: 6px; font-size: 10px; color: #777; text-align: center; }
.fx { display: flex; align-items: center; justify-content: space-around; width: 51px; font: 13px "Liberation Serif", serif; }
.formula { flex: 1; min-width: 0; padding: 0 6px; border-right: none; border-radius: 3px 0 0 3px; font-size: 9px; }

/* grid */
.sheet { position: relative; height: 226px; overflow: hidden; background: #fff; }
.sheet table {
    table-layout: fixed; width: 852px; height: 237px; border-spacing: 0;
    font: 13px/15px Lato, sans-serif; color: #000;
}
.col-row { width: 27px; }
.col-a { width: 62px; }
.col-b { width: 73px; }
.col-q { width: 63px; }
.sheet th, .sheet td { padding: 0; }
.sheet th { background: #f0f0f0; font-weight: normal; border-bottom: 1px solid #c4c4c4; border-right: 1px solid #c4c4c4; color: #222; }
.sheet thead th { height: 20px; }
.sheet th.on { background: #d2d2d2; color: #217346; border-bottom: 2px solid #217346; }
.corner svg { display: block; margin: 2px 1px 0 auto; }
.titles td { text-align: center; font-weight: bold; color: #fff; }
.titles td:nth-child(n+3) { background: #e04b41; border-right: 2px solid #fff; }
.titles td:last-child { border-right: none; }
.selection th { background: #d2d2d2; color: #217346; border-right: 2px solid #217346; }
.selection td { text-align: right; padding-right: 3px; }
.selection td:nth-child(n+3) { background: #c8c8c8; }
.selection td:nth-child(3) { text-align: left; padding-left: 2px; border-left: 1px solid #217346; }
.selection td:nth-child(8) { font-weight: bold; border-right: 1px solid #217346; position: relative; }
.selection tr:first-child td:nth-child(n+3) { border-top: 1px solid #217346; }
.selection tr:last-child td:nth-child(n+3) { border-bottom: 1px solid #217346; }
.selection td.current { background: #fff; }
.handle::after { content: ""; position: absolute; right: -2px; bottom: -2px; width: 4px; height: 4px; background: #217346; }
.callout { position: absolute; left: 491px; top: 78px; }

.down { display: block; margin: 24px auto 13px; }

/* rule dialog */
.dialog {
    position: relative; width: 408px; margin: 0 auto; background: #f0f0f0; color: #000;
    border: 1px solid #777; box-shadow: 2px 2px 4px 1px #999;
}
.dialog-title { display: flex; align-items: center; height: 25px; padding: 0 0 0 6px; background: #4b5358; color: #fff; font-size: 9px; }
.dialog-title span { flex: 1; }
.dialog-title button { width: 36px; }
.dialog-body { padding: 5px 5px 6px; }
.caption { padding: 2px 0; }
.caption, .types { font-family: "Open Sans", sans-serif; font-size: 9px; }
.types {
    display: grid; grid-template-rows: repeat(6, 1fr); height: 91px; margin: 0 0 9px; padding: 2px 1px 1px;
    list-style: none; background: #fff; border: 2px solid #6c6f76;
}
.types li { position: relative; display: flex; align-items: center; gap: 2px; padding-left: 3px; border-bottom: 1px solid #eee; }
.types .chosen { background: #dfdee3; border: none; }
.chosen::after { content: ""; position: absolute; left: -3px; top: -3px; bottom: -3px; width: 225px; border: 3px solid #f00; }
.rule { background: #fff; border: 2px solid #b0b3b8; }
.rule-formula { padding: 6px 7px 12px 3px; border-bottom: 2px solid #e5e5e5; }
.rule-formula label { display: block; margin-left: 3px; font-weight: bold; }
.field { position: relative; display: flex; height: 17px; margin-top: 5px; border: 1px solid #aaa; }
.field input { flex: 1; min-width: 0; padding: 0 4px; border: none; font-size: 9px; }
.field button { display: flex; align-items: center; justify-content: center; width: 17px; border: 1px solid #aaa; background: #f4f4f4; }
.field::after { content: ""; position: absolute; left: -1px; top: -3px; bottom: -3px; width: 92px; border: 3px solid #f00; }
.rule-preview { display: flex; align-items: center; gap: 8px; height: 49px; padding: 7px 7px 0 6px; }
.sample {
    flex: 1; height: 33px; line-height: 27px; text-align: center; font-size: 10px;
    background: #c8c8c8; border: 1px solid #777; box-shadow: inset 0 0 0 2px #fff; padding-top: 2px;
}
.btn { width: 59px; height: 18px; background: #e2e2e2; border: 1px solid #adadad; }
.format-btn { border: 3px solid #f00; line-height: 10px; }
.actions { display: flex; align-items: center; justify-content: flex-end; gap: 8px; padding: 1px 4px 0; }
.actions .ok { width: 61px; border: 3px solid #f00; }
.grip { position: absolute; right: 1px; bottom: 1px; }
```
